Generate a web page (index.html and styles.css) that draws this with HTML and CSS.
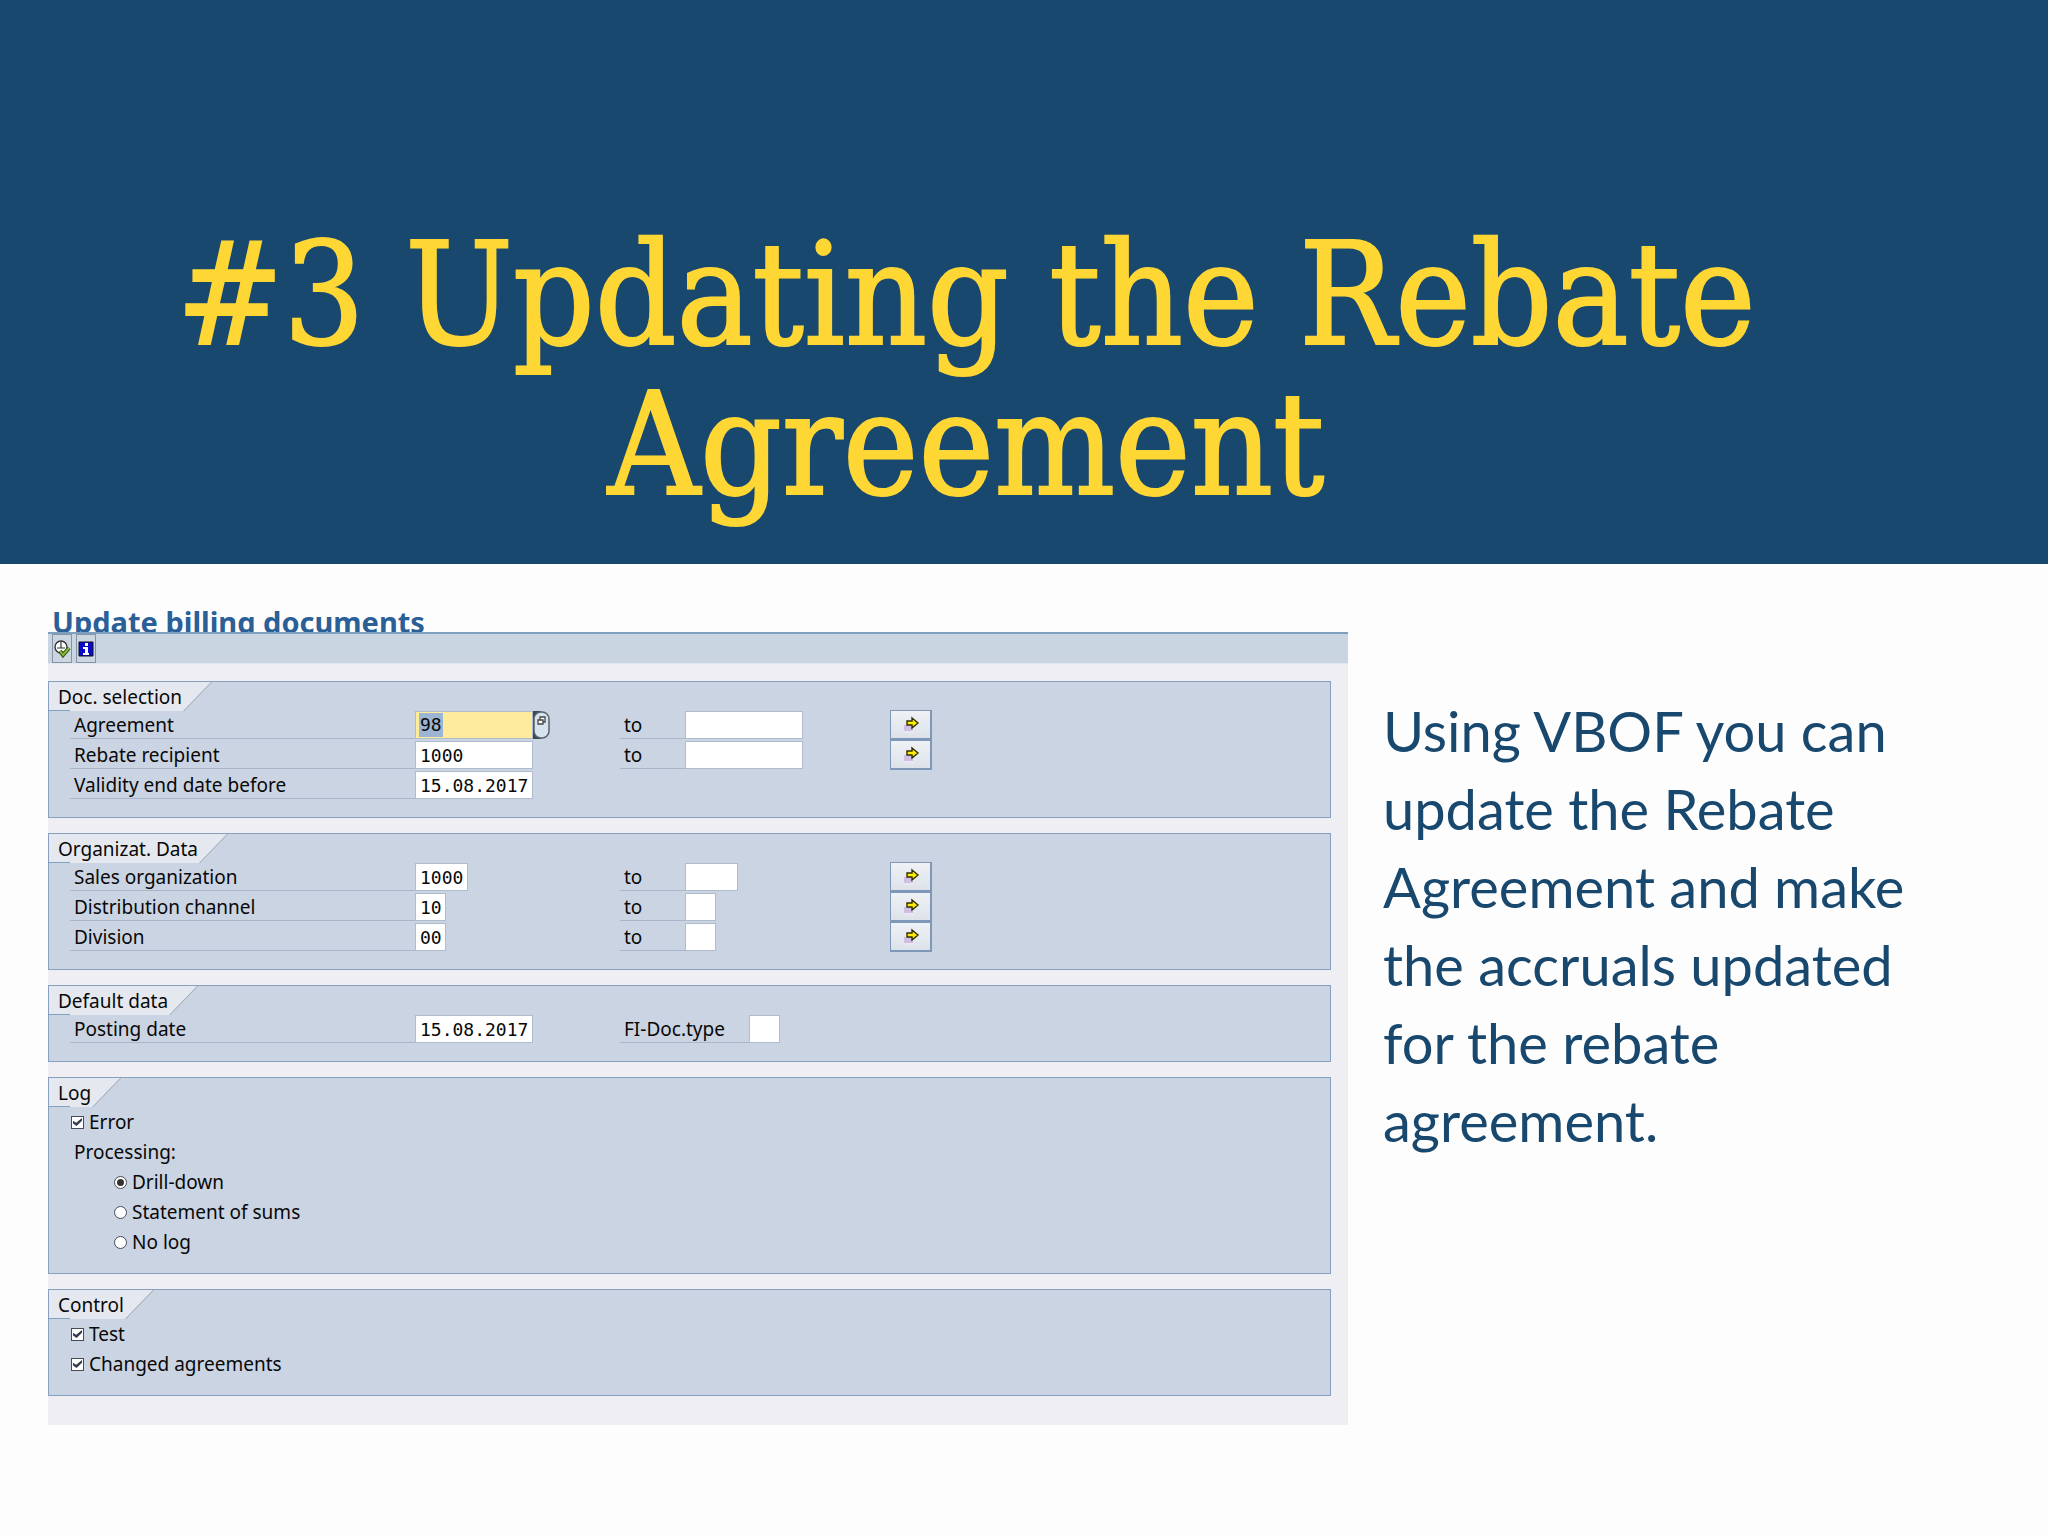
FILE: index.html
```
<!doctype html>
<html lang="en">

<head>
    <meta charset="utf-8" />
    <title>Updating the Rebate Agreement</title>
    <meta name="viewport" content="width=device-width, initial-scale=1">
    <link rel="stylesheet" href="styles.css">
</head>

<body>
    <svg class="sprite" aria-hidden="true">
        <symbol id="arrow" viewBox="0 0 18 18">
            <path d="M1 8h11v9h-11z" fill="#ebe6f2" />
            <path d="M2 9h9v6h-9z" fill="#cfbfe2" />
            <path d="M5 5h5V2l6 5-6 5V9H5z" fill="#ffee00" stroke="#332f00" stroke-width="1.4" />
        </symbol>
    </svg>
    <header class="banner">
        <h1>#3 Updating the Rebate Agreement</h1>
    </header>
    <main class="content">
        <form class="sap">
            <h2>Update billing documents</h2>
            <div class="toolbar">
                <button type="button" aria-label="Execute">
                    <svg width="18" height="18" viewBox="0 0 18 18">
                        <circle cx="8" cy="7" r="6" fill="#fff" stroke="#333" stroke-width="1.4" />
                        <path d="M8 2v6M4 8h8" fill="none" stroke="#333" stroke-width="1.2" />
                        <path d="M7 11l3 4 6-7" fill="none" stroke="#2f5512" stroke-width="4" />
                        <path d="M7 11l3 4 6-7" fill="none" stroke="#86b83a" stroke-width="2" />
                    </svg>
                </button>
                <button type="button" aria-label="Information">
                    <svg width="18" height="18" viewBox="0 0 18 18">
                        <path d="M2 2h14v14H2z" fill="#0a0ac8" stroke="#112" />
                        <path d="M8 3h3v3H8zM6 7h5v6h1v2H6v-2h2V9H6z" fill="#fff" />
                    </svg>
                </button>
            </div>

            <div class="groups">
                <section class="group">
                    <h3><span>Doc. selection</span></h3>
                    <div class="row">
                        <label for="agreement">Agreement</label>
                        <div class="field">
                            <span class="active"><input id="agreement" type="text" value="98"><mark>98</mark></span>
                            <button class="help" type="button" aria-label="Possible entries">
                                <svg width="17" height="28" viewBox="0 0 17 28">
                                    <path d="M0 0h8v28H0z" fill="#3c4650" />
                                    <rect x="1" y="1" width="15" height="26" rx="7" fill="#d5e4ef" stroke="#59636d" stroke-width="1.5" />
                                    <path d="M7 6h5v5H7z" fill="#fff" stroke="#444" stroke-width="1.3" />
                                    <path d="M5 9h5v4H5z" fill="#fff" stroke="#444" stroke-width="1.3" />
                                </svg>
                            </button>
                        </div>
                        <label for="agreement-to">to</label>
                        <input id="agreement-to" type="text">
                        <button class="more" type="button" aria-label="Multiple selection"><svg><use href="#arrow" /></svg></button>
                    </div>
                    <div class="row">
                        <label for="recipient">Rebate recipient</label>
                        <input id="recipient" type="text" value="1000">
                        <label for="recipient-to">to</label>
                        <input id="recipient-to" type="text">
                        <button class="more" type="button" aria-label="Multiple selection"><svg><use href="#arrow" /></svg></button>
                    </div>
                    <div class="row">
                        <label for="validity">Validity end date before</label>
                        <input id="validity" type="text" value="15.08.2017">
                    </div>
                </section>

                <section class="group">
                    <h3><span>Organizat. Data</span></h3>
                    <div class="row">
                        <label for="salesorg">Sales organization</label>
                        <input id="salesorg" class="four" type="text" value="1000">
                        <label for="salesorg-to">to</label>
                        <input id="salesorg-to" class="four" type="text">
                        <button class="more" type="button" aria-label="Multiple selection"><svg><use href="#arrow" /></svg></button>
                    </div>
                    <div class="row">
                        <label for="channel">Distribution channel</label>
                        <input id="channel" class="two" type="text" value="10">
                        <label for="channel-to">to</label>
                        <input id="channel-to" class="two" type="text">
                        <button class="more" type="button" aria-label="Multiple selection"><svg><use href="#arrow" /></svg></button>
                    </div>
                    <div class="row">
                        <label for="division">Division</label>
                        <input id="division" class="two" type="text" value="00">
                        <label for="division-to">to</label>
                        <input id="division-to" class="two" type="text">
                        <button class="more" type="button" aria-label="Multiple selection"><svg><use href="#arrow" /></svg></button>
                    </div>
                </section>

                <section class="group">
                    <h3><span>Default data</span></h3>
                    <div class="row wide">
                        <label for="posting">Posting date</label>
                        <input id="posting" type="text" value="15.08.2017">
                        <label for="doctype">FI-Doc.type</label>
                        <input id="doctype" class="two" type="text">
                    </div>
                </section>

                <section class="group">
                    <h3><span>Log</span></h3>
                    <label class="option"><input type="checkbox" checked>Error</label>
                    <p class="caption">Processing:</p>
                    <label class="option nested"><input type="radio" name="log" checked>Drill-down</label>
                    <label class="option nested"><input type="radio" name="log">Statement of sums</label>
                    <label class="option nested"><input type="radio" name="log">No log</label>
                </section>

                <section class="group">
                    <h3><span>Control</span></h3>
                    <label class="option"><input type="checkbox" checked>Test</label>
                    <label class="option"><input type="checkbox" checked>Changed agreements</label>
                </section>
            </div>
        </form>
        <p class="note">Using VBOF you can update the Rebate Agreement and make the accruals updated for the rebate agreement.</p>
    </main>
</body>

</html>
```

FILE: styles.css
```
* {
    box-sizing: border-box;
}

body {
    margin: 0;
    background: #fdfdfd;
    font-family: "Noto Sans", sans-serif;
    font-size: 19px;
    line-height: 28px;
    color: #080808;
}

h1,
h2,
h3,
p {
    margin: 0;
    font-weight: normal;
}

button {
    padding: 0;
}

.sprite {
    display: none;
}

.banner {
    padding: 220px 240px 44px 124px;
    background: #19486f;
}

.banner h1 {
    font-family: "DejaVu Serif Condensed", "DejaVu Serif", serif;
    font-size: 142px;
    line-height: 150px;
    text-align: center;
    color: #ffd735;
    -webkit-text-stroke: 2px #ffd735;
}

.content {
    display: grid;
    grid-template-columns: 2fr 1fr;
    gap: 35px;
    padding: 40px 15px 40px 48px;
}

.sap h2 {
    height: 28px;
    padding-left: 4px;
    overflow: hidden;
    font-size: 29px;
    font-weight: bold;
    line-height: 36px;
    color: #2a5f98;
}

.toolbar {
    display: flex;
    gap: 4px;
    height: 32px;
    padding: 0 4px;
    border-top: 2px solid #7f9fbe;
    border-bottom: 1px solid #dfe7ef;
    background: #cad5e2;
}

.toolbar button {
    display: flex;
    align-items: center;
    justify-content: center;
    width: 20px;
    height: 29px;
    border: 1px solid #8494a6;
    background: #ccd6e1;
}

.toolbar svg {
    flex: none;
}

.groups {
    display: flex;
    flex-direction: column;
    gap: 15px;
    padding: 17px 17px 29px 0;
    background: #efeff3;
}

.group {
    padding-bottom: 16px;
    border: 1px solid #86a0c0;
    background: #cbd4e2;
}

/* slanted tab: the heading's own colour shows as a thin edge */
.group h3 {
    width: fit-content;
    height: 29px;
    padding-right: 1px;
    background: #94a3b6;
    font-size: 19px;
    line-height: 30px;
    clip-path: polygon(0 0, 100% 0, calc(100% - 28px) 100%, 0 100%);
}

.group h3 span {
    display: block;
    height: 29px;
    padding: 0 29px 0 9px;
    background: linear-gradient(#86a0c0, #86a0c0) 0 100% / 21px 1px no-repeat, #e5e9ef;
    clip-path: polygon(0 0, 100% 0, calc(100% - 28px) 100%, 0 100%);
}

.row {
    display: grid;
    grid-template-columns: 345px 205px 65px 205px 43px;
    align-items: start;
    height: 30px;
    padding-left: 21px;
}

.row.wide {
    grid-template-columns: 345px 205px 129px 205px;
}

.row label {
    height: 28px;
    padding-left: 4px;
    border-bottom: 1px solid #a9b5c8;
}

input[type=text] {
    width: 118px;
    height: 28px;
    padding: 0 4px;
    border: 1px solid #b0bccd;
    background: #fff;
    font-family: "DejaVu Sans Mono", monospace;
    font-size: 18px;
    color: #080808;
}

input.four {
    width: 53px;
}

input.two {
    width: 31px;
}

.field {
    display: flex;
}

.active {
    position: relative;
}

.active input[type=text] {
    display: block;
    background: #ffeb9c;
}

/* selected part of the value */
.active mark {
    position: absolute;
    top: 2px;
    left: 4px;
    padding: 0 1px;
    background: #9bb5d3;
    font-family: "DejaVu Sans Mono", monospace;
    font-size: 18px;
    line-height: 24px;
    color: #080808;
}

.help {
    display: flex;
    border: 0;
    background: none;
}

.more {
    display: flex;
    align-items: center;
    justify-content: center;
    width: 42px;
    height: 30px;
    margin-top: -1px;
    border: 1px solid #7f98b8;
    border-width: 1px 2px 2px 1px;
    background: linear-gradient(#eef2f6, #dde2ea);
}

.more svg {
    width: 18px;
    height: 18px;
}

.option {
    display: flex;
    align-items: center;
    gap: 5px;
    height: 30px;
    padding-left: 22px;
}

.option.nested {
    padding-left: 65px;
}

.caption {
    height: 30px;
    padding-left: 25px;
    line-height: 30px;
}

.option input {
    appearance: none;
    display: grid;
    place-items: center;
    width: 13px;
    height: 13px;
    margin: 0;
    border: 1px solid #444c58;
    background: #fff;
}

.option input[type=radio] {
    border-radius: 50%;
}

.option input[type=radio]:checked::before {
    content: "";
    width: 7px;
    height: 7px;
    border-radius: 50%;
    background: #333;
}

.option input[type=checkbox]:checked::before {
    content: "";
    width: 9px;
    height: 8px;
    background: #333c50;
    clip-path: polygon(0 35%, 35% 60%, 100% 0, 100% 35%, 40% 100%, 0 70%);
}

.note {
    padding: 88px 90px 0 0;
    font-family: Lato, sans-serif;
    font-size: 56px;
    line-height: 78px;
    color: #19486f;
}
```
